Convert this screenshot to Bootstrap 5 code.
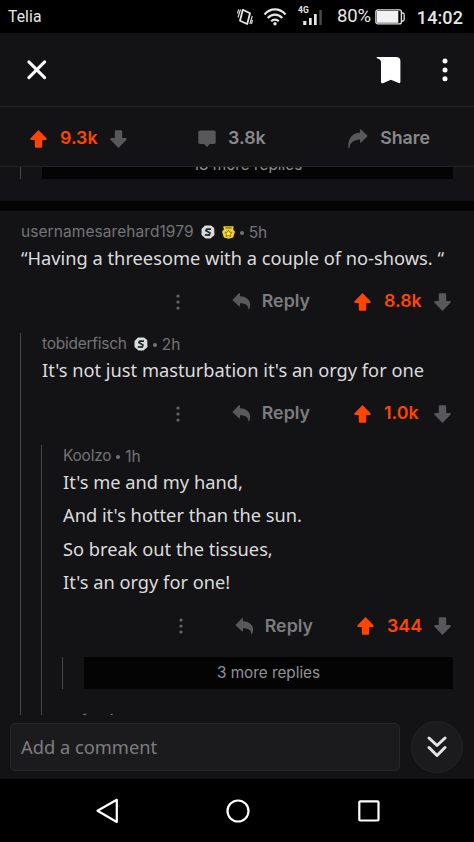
<!DOCTYPE html>
<html lang="en">
<head>
  <meta charset="utf-8" />
  <meta name="viewport" content="width=device-width, initial-scale=1" />
  <title>Comments</title>
  <link href="https://cdn.jsdelivr.net/npm/bootstrap@5.3.2/dist/css/bootstrap.min.css" rel="stylesheet" />
  <style>
    body {
      background: #131315;
      color: #dcdcdd;
      font-family: "Noto Sans", sans-serif;
    }
    svg { display: block; flex-shrink: 0; }
    .ui-font { font-family: Inter, sans-serif; }

    .status-bar { height: 33px; padding: 1px 11px 0 8px; background: #000; color: #e6e6e6; font-family: Roboto, sans-serif; }
    .carrier { font-size: 15.7px; letter-spacing: .1px; }
    .battery-text { font-size: 18.5px; letter-spacing: -.2px; margin-left: 13px; }
    .clock { font-size: 18px; font-weight: 500; letter-spacing: .1px; margin-left: 12px; }

    .top-bar { height: 74px; padding: 0 25px 0 27px; border-bottom: 1px solid #232325; }
    .menu-dots { margin-left: 39px; }
    .post-bar { height: 60px; padding: 4px 44px 0 30px; border-bottom: 1px solid #232325; color: #88898b; font-size: 17.8px; font-weight: 600; }
    .post-score { width: 38px; margin: 0 12px 0 13px; }
    .post-comments { margin-left: 71px; }
    .vote-on { color: #ff4500; }
    .icon-dim { color: #58585a; }

    .feed { min-height: 0; }
    .feed-inner { margin-top: -20.5px; }
    .post-gap { height: 10px; margin: 22px 0 11px; background: #030304; }
    .thread { padding: 0 21px; }
    .replies { margin: 5.5px 0 0 -1px; padding: 1px 0 0 21px; border-left: 1px solid #464648; }
    .replies-end { padding-top: 0; }
    .more-box { height: 32px; padding-top: 1px; background: #040405; color: #929294; font-size: 15.3px; }
    .more-cut { padding-top: 5px; }
    .meta-row { height: 20px; padding-top: 1px; color: #747476; font-size: 15.5px; white-space: nowrap; }
    .meta-tight { letter-spacing: -.25px; }
    .meta-wide { letter-spacing: .07px; }
    .meta-badge { margin-left: 7px; }
    .meta-dot { width: 4px; height: 4px; margin: 2px 5px 0; background: #747476; }
    .meta-time { margin-top: 2px; }
    .comment-text { margin: -1px 0 1px; font-size: 18.25px; line-height: 33.5px; white-space: nowrap; }
    .actions { height: 52px; padding: 1px 2px 0 0; color: #7c7c7e; font-size: 17.8px; font-weight: 600; }
    .action-dots { color: #68686a; }
    .reply-btn { margin: 0 44px 0 52px; gap: 11px; }
    .score { margin: 0 12px 0 13px; }
    .score-k { width: 38px; }
    .next-author { margin-top: 19px; }

    .compose { height: 64px; padding: 0 11px 0 10px; gap: 11px; }
    .compose-input { height: 48px; padding: 0 10px; background: #1b1b1d; border: 1px solid #262628; border-radius: 5px; color: #7d7d80; font-size: 18.3px; }
    .jump-btn { width: 52px; height: 52px; background: #1b1b1d; border: 1px solid #242426; margin-top: -1px; }
    .nav-bar { height: 63px; background: #000; padding: 0 94px 0 95px; }
    .nav-home { margin-right: 2px; }
  </style>
</head>
<body>
  <svg width="0" height="0" class="position-absolute">
    <symbol id="i-up" viewBox="0 0 17 18"><path d="M8.5 0 L16.7 8.6 Q17 10 15.8 10 H12.2 V16.6 Q12.2 17.8 11 17.8 H6 Q4.8 17.8 4.8 16.6 V10 H1.2 Q0 10 .3 8.6Z" fill="currentColor" /></symbol>
    <symbol id="i-down" viewBox="0 0 17 18"><path d="M8.5 18 L16.7 9.4 Q17 8 15.8 8 H12.2 V1.4 Q12.2 .2 11 .2 H6 Q4.8 .2 4.8 1.4 V8 H1.2 Q0 8 .3 9.4Z" fill="currentColor" /></symbol>
    <symbol id="i-reply" viewBox="0 0 19 17"><path d="M.3 7 L7 .3 Q8 -.2 8 1 V3.3 C15 3.5 18.5 8 18.2 12.5 Q18 15.5 16.3 16.7 C16.5 12.5 13.5 10.2 8 10.3 V12.6 Q8 13.8 7 13.2Z" fill="currentColor" /></symbol>
    <symbol id="i-share" viewBox="0 0 20 20"><path d="M19.8 7 L13 .4 Q12 -.2 12 1 V3.4 C4 4.2 0 9.5 .2 18 Q.4 20 1.4 19 C2.2 13.5 5.5 11 12 10.6 V13 Q12 14.2 13 13.6Z" fill="currentColor" /></symbol>
    <symbol id="i-dots" viewBox="0 0 4 16"><g fill="currentColor"><circle cx="2" cy="2" r="1.6" /><circle cx="2" cy="8" r="1.6" /><circle cx="2" cy="14" r="1.6" /></g></symbol>
    <symbol id="i-silver" viewBox="0 0 14 14"><path d="M4 .5 H10 L13.2 3 L13.5 10 L9.5 13.5 H4.5 L.5 10 V4Z" fill="#d9dcdd" /><path d="M10 4.2 L5.8 4 L4.8 5.6 L9 8 L8.2 10.2 L3.8 9.8" fill="none" stroke="#242527" stroke-width="1.7" stroke-linejoin="round" /></symbol>
    <symbol id="i-gold" viewBox="0 0 14 15"><path d="M1.4 .8 H12.6 L12 4.2 L14 6.6 L12 13 L7 14.3 L2 13 L0 6.6 L2 4.2Z" fill="#f0cf35" /><path d="M3.6 2.6 H10.4" fill="none" stroke="#6b5608" stroke-width="1.1" /><path d="M7 5 L8.2 7.2 L10.9 7.5 L9 9.3 L9.4 11.9 L7 10.8 L4.6 11.9 L5 9.3 L3.1 7.5 L5.8 7.2Z" fill="#ffe65b" stroke="#876b0b" stroke-width=".9" /></symbol>
  </svg>

  <div class="vh-100 d-flex flex-column overflow-hidden">
    <!-- phone status bar -->
    <div class="status-bar d-flex align-items-center flex-shrink-0">
      <span class="carrier me-auto">Telia</span>
      <svg width="16" height="18" viewBox="0 0 16 18" fill="none" stroke="#e6e6e6">
        <path d="M5.8 1.8 L13 5.2 L10.2 16 L3 12.7Z" stroke-width="1.8" stroke-linejoin="round" />
        <path d="M3.5 1.5 L1 9.5 M1.6 1.5 L.5 5.5 M15.3 8 L12.8 16 M15.5 12 L14.5 16" stroke-width="1.1" />
      </svg>
      <svg class="ms-2 me-2" width="28" height="18" viewBox="0 0 28 18" fill="none" stroke="#e6e6e6" stroke-width="2.2">
        <path d="M3.5 6.4 C9.5 -.2 18.5 -.2 24.5 6.4" /><path d="M6.8 10 C11 5.6 17 5.6 21.2 10" /><path d="M10.2 13.3 C12.5 11 15.5 11 17.8 13.3" /><circle cx="14" cy="15.8" r="1.7" fill="#e6e6e6" stroke="none" />
      </svg>
      <svg width="27" height="22" viewBox="0 0 27 22">
        <text x="1" y="7.3" font-size="8.5" font-weight="700" fill="#e6e6e6" font-family="Roboto">4G</text>
        <rect x="6.2" y="15" width="3.2" height="4" fill="#e6e6e6" /><rect x="12" y="12" width="2.7" height="7" fill="#e6e6e6" /><rect x="17" y="8" width="2.7" height="11" fill="#e6e6e6" /><rect x="22.3" y="4" width="2.5" height="15" fill="#4a4a4a" />
      </svg>
      <span class="battery-text">80%</span>
      <svg class="ms-1" width="30" height="16" viewBox="0 0 30 16">
        <rect x=".9" y=".9" width="25.5" height="14" rx="2" fill="none" stroke="#dedede" stroke-width="1.4" /><rect x="2" y="2" width="21.3" height="11.8" fill="#f2f2f2" /><path d="M27 4 H28 Q29.2 4 29.2 6 V10 Q29.2 12 28 12 H27" fill="none" stroke="#dedede" stroke-width="1.3" />
      </svg>
      <span class="clock">14:02</span>
    </div>

    <div class="top-bar d-flex align-items-center justify-content-between flex-shrink-0">
      <svg width="20" height="20" viewBox="0 0 20 20" stroke="#fff" stroke-width="3" stroke-linecap="round"><path d="M1.9 1.9 L17.6 17.6 M17.6 1.9 L1.9 17.6" /></svg>
      <div class="d-flex align-items-center">
        <svg width="26" height="28" viewBox="0 0 26 28"><path d="M.3 .9 H20 Q24.4 1 24.4 5 V26 Q24.2 27.5 22.8 27 L14.8 23.8 L7 27.2 Q5 27.8 5 26 V6 Q4.8 3.2 1.4 2.4Z" fill="#fff" /></svg>
        <svg class="menu-dots" width="8" height="24" viewBox="0 0 8 24" fill="#fff"><circle cx="4" cy="3" r="2.5" /><circle cx="4" cy="12" r="2.5" /><circle cx="4" cy="20.8" r="2.5" /></svg>
      </div>
    </div>

    <div class="post-bar ui-font d-flex align-items-center flex-shrink-0">
      <svg class="vote-on" width="17" height="18"><use href="#i-up" /></svg>
      <span class="post-score vote-on">9.3k</span>
      <svg class="icon-dim" width="17" height="18"><use href="#i-down" /></svg>
      <div class="post-comments d-flex align-items-center">
        <svg class="icon-dim me-2" width="18" height="18" viewBox="0 0 18 18"><path d="M2 .5 H16 Q17.7 .5 17.7 2.2 V12.5 Q17.7 14 16 14 H11.8 L9 17 L6.2 14 H2 Q.3 14 .3 12.5 V2.2 Q.3 .5 2 .5Z" fill="currentColor" /></svg>
        <span class="ms-1">3.8k</span>
      </div>
      <div class="d-flex align-items-center ms-auto">
        <svg class="icon-dim me-2" width="20" height="20"><use href="#i-share" /></svg>
        <span class="ms-1">Share</span>
      </div>
    </div>

    <!-- comment feed, scrolled -->
    <div class="feed flex-fill overflow-hidden">
      <div class="feed-inner">
        <div class="thread">
          <div class="replies replies-end mt-0">
            <div class="more-box more-cut ui-font d-flex align-items-center justify-content-center">18 more replies</div>
          </div>
        </div>
        <div class="post-gap"></div>

        <div class="thread">
          <div class="meta-row ui-font d-flex align-items-center">
            <span class="meta-wide">usernamesarehard1979</span>
            <svg class="meta-badge" width="14" height="14"><use href="#i-silver" /></svg>
            <svg class="meta-badge" width="13" height="15"><use href="#i-gold" /></svg>
            <span class="meta-dot rounded-circle"></span>
            <span class="meta-time">5h</span>
          </div>
          <div class="comment-text">“Having a threesome with a couple of no-shows. “</div>
          <div class="actions ui-font d-flex align-items-center justify-content-end">
            <svg class="action-dots" width="4" height="16"><use href="#i-dots" /></svg>
            <div class="reply-btn d-flex align-items-center"><svg class="icon-dim" width="19" height="17"><use href="#i-reply" /></svg>Reply</div>
            <div class="d-flex align-items-center vote-on"><svg width="17" height="18"><use href="#i-up" /></svg><span class="score score-k">8.8k</span><svg class="icon-dim" width="17" height="18"><use href="#i-down" /></svg></div>
          </div>

          <div class="replies">
            <div class="meta-row ui-font d-flex align-items-center">
              <span class="meta-tight">tobiderfisch</span>
              <svg class="meta-badge" width="14" height="14"><use href="#i-silver" /></svg>
              <span class="meta-dot rounded-circle"></span>
              <span class="meta-time">2h</span>
            </div>
            <div class="comment-text">It's not just masturbation it's an orgy for one</div>
            <div class="actions ui-font d-flex align-items-center justify-content-end">
              <svg class="action-dots" width="4" height="16"><use href="#i-dots" /></svg>
              <div class="reply-btn d-flex align-items-center"><svg class="icon-dim" width="19" height="17"><use href="#i-reply" /></svg>Reply</div>
              <div class="d-flex align-items-center vote-on"><svg width="17" height="18"><use href="#i-up" /></svg><span class="score score-k">1.0k</span><svg class="icon-dim" width="17" height="18"><use href="#i-down" /></svg></div>
            </div>

            <div class="replies">
              <div class="meta-row ui-font d-flex align-items-center">
                <span class="meta-tight">Koolzo</span>
                <span class="meta-dot rounded-circle"></span>
                <span class="meta-time">1h</span>
              </div>
              <div class="comment-text">It's me and my hand,<br />And it's hotter than the sun.<br />So break out the tissues,<br />It's an orgy for one!</div>
              <div class="actions ui-font d-flex align-items-center justify-content-end">
                <svg class="action-dots" width="4" height="16"><use href="#i-dots" /></svg>
                <div class="reply-btn d-flex align-items-center"><svg class="icon-dim" width="19" height="17"><use href="#i-reply" /></svg>Reply</div>
                <div class="d-flex align-items-center vote-on"><svg width="17" height="18"><use href="#i-up" /></svg><span class="score">344</span><svg class="icon-dim" width="17" height="18"><use href="#i-down" /></svg></div>
              </div>

              <div class="replies replies-end">
                <div class="more-box ui-font d-flex align-items-center justify-content-center">3 more replies</div>
              </div>
              <div class="meta-row next-author ui-font">cafaroi</div>
            </div>
          </div>
        </div>
      </div>
    </div>

    <div class="compose d-flex align-items-center flex-shrink-0">
      <div class="compose-input d-flex align-items-center flex-fill">Add a comment</div>
      <div class="jump-btn rounded-circle d-flex align-items-center justify-content-center">
        <svg width="20" height="22" viewBox="0 0 20 22" fill="none" stroke="#e4e4e5" stroke-width="3" stroke-linecap="round" stroke-linejoin="round"><path d="M2 2 L10 9.5 L18 2 M2 11.5 L10 19.5 L18 11.5" /></svg>
      </div>
    </div>

    <!-- system navigation -->
    <div class="nav-bar d-flex align-items-center justify-content-between flex-shrink-0">
      <svg width="24" height="26" viewBox="0 0 24 26" fill="none" stroke="#fff" stroke-width="2.2" stroke-linejoin="round"><path d="M21.8 1.8 V24 L2.5 12.8Z" /></svg>
      <svg class="nav-home" width="24" height="24" viewBox="0 0 24 24" fill="none" stroke="#fff" stroke-width="2.2"><circle cx="12" cy="12" r="10.5" /></svg>
      <svg width="22" height="22" viewBox="0 0 22 22" fill="none" stroke="#fff" stroke-width="2.2"><rect x="1.3" y="1.3" width="19.2" height="19.2" rx="1" /></svg>
    </div>
  </div>

  <script src="https://cdn.jsdelivr.net/npm/bootstrap@5.3.2/dist/js/bootstrap.bundle.min.js"></script>
</body>
</html>
